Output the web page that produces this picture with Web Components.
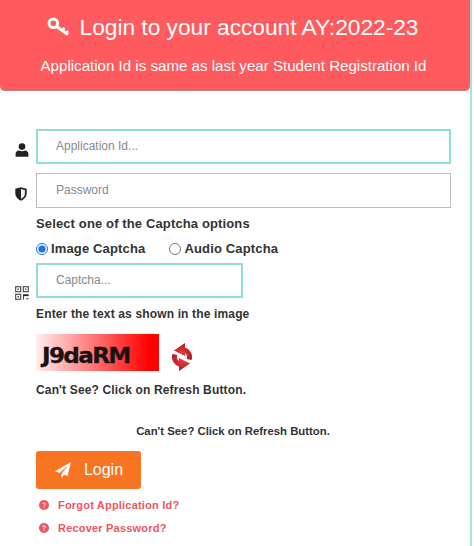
<!DOCTYPE html>
<html>
<head>
<meta charset="utf-8">
<title>Login</title>
<style>
  html, body { margin: 0; padding: 0; background: #fff; }
  body { font-family: "Liberation Sans", Arial, sans-serif; color: #333; }
</style>
</head>
<body>
<login-panel>
  <login-header slot="header" subtitle="Application Id is same as last year Student Registration Id">Login to your account AY:2022-23</login-header>

  <field-row icon="user" placeholder="Application Id..." focus></field-row>
  <field-row icon="shield" placeholder="Password" type="password"></field-row>
  <form-note large>Select one of the Captcha options</form-note>
  <captcha-choice></captcha-choice>
  <field-row icon="qr" placeholder="Captcha..." short focus></field-row>
  <form-note>Enter the text as shown in the image</form-note>
  <captcha-image>J9daRM</captcha-image>
  <form-note refresh>Can't See? Click on Refresh Button.</form-note>
  <form-note center>Can't See? Click on Refresh Button.</form-note>
  <login-button>Login</login-button>
  <help-link>Forgot Application Id?</help-link>
  <help-link>Recover Password?</help-link>
</login-panel>

<script>
/* === ICONS ==================================================================================== */

const ARROW = 'M20.540 17A10 10 0 0 0 14 4.460V0L3 7.500 14 13V10A5 5 0 0 1 15.580 16Z';

const ICONS = {
  user: `<svg viewBox="0 0 14 14" width="14" height="14"><circle cx="7" cy="3.6" r="3.300" fill="#222"/><path d="M.6 13.800V10.800C.6 8.900 2.200 7.400 4.100 7.400c.8.500 1.900.8 2.900.8s2.100-.3 2.900-.8c1.900 0 3.500 1.500 3.500 3.400v3z" fill="#222"/></svg>`,
  shield: `<svg viewBox="0 0 12 14" width="12" height="14"><path d="M6 .3 11.700 1.800v4.800c0 3.400-2.400 5.800-5.700 7.100C2.700 12.400.3 10 .3 6.600V1.800z" fill="#222"/><path d="M6 2.100 9.900 3.100v3.500c0 2.400-1.600 4.200-3.900 5.300z" fill="#f1f1f1"/></svg>`,
  qr: `<svg viewBox="0 0 14 14" width="14" height="14" fill="none" stroke="#444" stroke-width="1.100"><rect x=".7" y=".7" width="5" height="5"/><rect x="8.300" y=".7" width="5" height="5"/><rect x=".7" y="8.300" width="5" height="5"/><rect x="2.500" y="2.500" width="1.400" height="1.400" fill="#444" stroke="none"/><rect x="10.100" y="2.500" width="1.400" height="1.400" fill="#444" stroke="none"/><rect x="2.500" y="10.100" width="1.400" height="1.400" fill="#444" stroke="none"/><path d="M8 9.200h5.600" stroke-width="1.800" stroke="#222"/><path d="M8.500 10v3.500M11 12.800h2.600" stroke-width="1.100"/></svg>`,
  plane: `<svg viewBox="0 0 16 16" width="16" height="16"><path d="M16 0 0 9.200l4.600 1.900L13 3.600 6.400 12v4l2.700-3.300 3.400 1.400z" fill="#fff"/></svg>`,
  help: `<svg viewBox="0 0 10 10" width="10" height="10"><circle cx="5" cy="5" r="5" fill="#ee5560"/><path d="M3.200 3.900C3.300 2.900 4 2.400 5 2.400s1.800.6 1.800 1.500c0 .7-.4 1-.9 1.300-.4.3-.5.4-.5.9H4.600c0-.8.2-1.100.7-1.400.4-.3.6-.4.6-.8S5.500 3.300 5 3.300s-.8.3-.9.7z" fill="#fff"/><rect x="4.500" y="6.700" width="1" height="1" fill="#fff"/></svg>`,
  key: `<svg viewBox="0 0 23 20" width="23" height="20" fill="none" stroke="#fff"><circle cx="6.300" cy="6.300" r="4.300" stroke-width="3"/><path d="M9.500 9.500l11.500 8" stroke-width="3.200"/><path d="M15.500 13.500l2-2.800M19.200 16.200l1.800-2.500" stroke-width="2.400"/></svg>`,
  refresh: `<svg viewBox="0 0 22 28" width="22" height="28"><defs><radialGradient id="r" gradientUnits="userSpaceOnUse" cx="10" cy="11" r="14"><stop offset="0" stop-color="#ee3c42"/><stop offset="1" stop-color="#a01318"/></radialGradient></defs><path d="${ARROW}" fill="url(#r)"/><path d="${ARROW}" fill="url(#r)" transform="rotate(180 11 14)"/></svg>`
};

/* === COMPONENTS =============================================================================== */

//=======//
// PANEL //
//=======//

class LoginPanel extends HTMLElement {
  constructor() {
    super();
    this.attachShadow({ mode: 'open' });
    this.shadowRoot.innerHTML = `
      <style>
        :host {
          border-right: solid 2px #a9e0e0;
          box-sizing: border-box;
          display: block;
          height: 546px;
          overflow: hidden;
          width: 472px;
        }
        main {
          display: flex;
          flex-direction: column;
        }
        .body {
          display: flex;
          flex-direction: column;
          padding: 38px 19px 0 0;
        }
      </style>
      <main>
        <slot name="header"></slot>
        <div class="body"><slot></slot></div>
      </main>
    `;
  }
}
customElements.define('login-panel', LoginPanel);

//========//
// HEADER //
//========//

class LoginHeader extends HTMLElement {
  connectedCallback() {
    this.attachShadow({ mode: 'open' });
    this.shadowRoot.innerHTML = `
      <style>
        :host {
          align-items: center;
          background: #ff5b5f;
          border-bottom: solid 1px #c9747a;
          border-radius: 0 0 5px 5px;
          box-sizing: border-box;
          color: #fff;
          display: flex;
          flex-direction: column;
          height: 91px;
          width: 470px;
        }
        h1 {
          align-items: center;
          display: flex;
          font-size: 22.7px;
          font-weight: 400;
          gap: 10px;
          line-height: 26px;
          margin: 14px 5px 0 0;
        }
        p {
          font-size: 15.1px;
          line-height: 20px;
          margin: 16px 3px 0 0;
        }
        svg { display: block; }
      </style>
      <h1>${ICONS.key}<span><slot></slot></span></h1>
      <p>${this.getAttribute('subtitle')}</p>
    `;
  }
}
customElements.define('login-header', LoginHeader);

//============//
// FIELD ROW  //
//============//

class FieldRow extends HTMLElement {
  connectedCallback() {
    this.attachShadow({ mode: 'open' });
    const focus = this.hasAttribute('focus');
    this.shadowRoot.innerHTML = `
      <style>
        :host {
          display: grid;
          grid-template-columns: 36px 1fr;
          margin-bottom: 9.500px;
        }
        :host([short]) { margin-bottom: 0; margin-top: 3px; width: 243px; }
        :host([icon="shield"]) { margin-bottom: 0; }
        .icon {
          align-items: end;
          display: flex;
          padding-bottom: 6.500px;
          padding-left: 15px;
        }
        :host([icon="qr"]) .icon { padding-bottom: 0; margin-bottom: -2.300px; }
        .icon svg { display: block; }
        input {
          border: solid ${focus ? '2px #94dcdc' : '1px #bdbdbd'};
          box-sizing: border-box;
          color: #555;
          font: 12px "Liberation Sans", Arial, sans-serif;
          height: 34.500px;
          outline: none;
          padding: 0 ${focus ? '18px' : '19px'};
          width: 100%;
        }
        input::placeholder { color: #8a8a8a; opacity: 1; }
      </style>
      <div class="icon">${ICONS[this.getAttribute('icon')]}</div>
      <input type="${this.getAttribute('type') || 'text'}" placeholder="${this.getAttribute('placeholder')}">
    `;
  }
}
customElements.define('field-row', FieldRow);

//======//
// NOTE //
//======//

class FormNote extends HTMLElement {
  constructor() {
    super();
    this.attachShadow({ mode: 'open' }).innerHTML = `
      <style>
        :host {
          color: #333;
          display: block;
          font-size: 12px;
          font-weight: 700;
          letter-spacing: .15px;
          line-height: 16px;
          padding: 8px 0 0 36px;
        }
        :host([large]) { font-size: 13px; letter-spacing: .13px; }
        :host([refresh]) { padding-top: 11px; }
        :host([center]) {
          font-size: 11.350px;
          letter-spacing: 0;
          padding: 25px 0 0 15px;
          text-align: center;
        }
      </style>
      <slot></slot>
    `;
  }
}
customElements.define('form-note', FormNote);

//================//
// CAPTCHA CHOICE //
//================//

class CaptchaChoice extends HTMLElement {
  constructor() {
    super();
    this.attachShadow({ mode: 'open' }).innerHTML = `
      <style>
        :host {
          align-items: center;
          display: flex;
          font-size: 13px;
          font-weight: 700;
          gap: 24px;
          height: 23px;
          letter-spacing: .15px;
          margin-top: 5.500px;
          padding-left: 36px;
        }
        label { align-items: center; display: flex; gap: 3px; }
        input { accent-color: #1a73e8; height: 12px; margin: 0; width: 12px; }
      </style>
      <label><input type="radio" name="c" checked>Image Captcha</label>
      <label><input type="radio" name="c">Audio Captcha</label>
    `;
  }
}
customElements.define('captcha-choice', CaptchaChoice);

//===============//
// CAPTCHA IMAGE //
//===============//

class CaptchaImage extends HTMLElement {
  constructor() {
    super();
    this.attachShadow({ mode: 'open' }).innerHTML = `
      <style>
        :host {
          align-items: center;
          display: flex;
          gap: 12px;
          margin-top: 12px;
          padding-left: 36px;
        }
        .pic {
          background: linear-gradient(90deg, #ffeeee 0%, #ff0000 92%);
          box-sizing: border-box;
          color: #1a1212;
          font: 700 21px "DejaVu Sans", sans-serif;
          height: 37.700px;
          letter-spacing: -1.500px;
          line-height: 45px;
          overflow: hidden;
          padding-left: 6px;
          white-space: nowrap;
          width: 123px;
          -webkit-text-stroke: .3px #1a1212;
        }
        .pic span { display: inline-block; transform: scaleX(1.1); transform-origin: left center; }
        .refresh { margin-top: 9px; }
        svg { display: block; }
      </style>
      <div class="pic"><span><slot></slot></span></div>
      <div class="refresh">${ICONS.refresh}</div>
    `;
  }
}
customElements.define('captcha-image', CaptchaImage);

//========//
// BUTTON //
//========//

class LoginButton extends HTMLElement {
  constructor() {
    super();
    this.attachShadow({ mode: 'open' }).innerHTML = `
      <style>
        :host {
          display: block;
          margin-top: 12px;
          padding-left: 36px;
        }
        button {
          align-items: center;
          background: #f77423;
          border: 0;
          border-radius: 3px;
          color: #fff;
          display: flex;
          font: 16px "Liberation Sans", Arial, sans-serif;
          gap: 13px;
          height: 38px;
          justify-content: center;
          padding: 0 0 0 1px;
          width: 105px;
        }
        svg { display: block; }
      </style>
      <button>${ICONS.plane}<slot></slot></button>
    `;
  }
}
customElements.define('login-button', LoginButton);

//======//
// LINK //
//======//

class HelpLink extends HTMLElement {
  constructor() {
    super();
    this.attachShadow({ mode: 'open' }).innerHTML = `
      <style>
        :host {
          align-items: center;
          color: #ee5560;
          display: flex;
          font-size: 11px;
          font-weight: 700;
          gap: 9px;
          height: 23px;
          letter-spacing: .2px;
          padding-left: 39px;
        }
        :host(:nth-of-type(1)) { margin-top: 4.500px; }
        svg { display: block; }
      </style>
      ${ICONS.help}<span><slot></slot></span>
    `;
  }
}
customElements.define('help-link', HelpLink);
</script>
</body>
</html>
